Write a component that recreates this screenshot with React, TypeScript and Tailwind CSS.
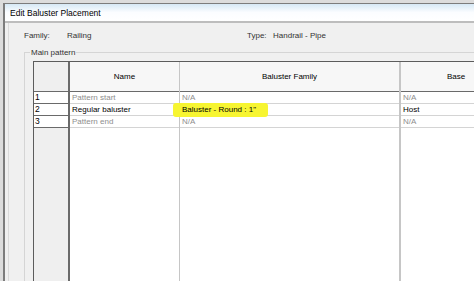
import React from "react";

const rows = [
  { n: "1", name: "Pattern start", fam: "N/A", base: "N/A", dim: true },
  { n: "2", name: "Regular baluster", fam: "Baluster - Round : 1\"", base: "Host", dim: false },
  { n: "3", name: "Pattern end", fam: "N/A", base: "N/A", dim: true },
];

export default function App() {
  return (
    <div
      className="w-[474px] h-[281px] overflow-hidden bg-[#dcdcdc] pt-[3px] pl-[3px] text-[8px] leading-none text-black"
      style={{ fontFamily: '"Liberation Sans", Arial, sans-serif' }}
    >
      <div className="h-[300px] border-l-2 border-t border-[#7c7c7c] bg-[#f0f0f0] flex flex-col">
        {/* title bar */}
        <div className="h-[19px] shrink-0 bg-gradient-to-b from-[#d6e8f5] via-[#fbfdff] to-white border-b-2 border-[#bdbdbd] flex items-center pl-[5px] pt-[1px]">
          <span className="text-[8.5px]">Edit Baluster Placement</span>
        </div>
        <div className="flex-1 border-l border-[#dadada] ml-[3px] pl-[15px] pt-[9px]">
          {/* Family / Type */}
          <div className="flex items-center h-[8px] text-[#333]">
            <span className="w-[43px]">Family:</span>
            <span className="w-[180px]">Railing</span>
            <span className="w-[26px]">Type:</span>
            <span>Handrail - Pipe</span>
          </div>
          {/* group box */}
          <div className="mt-[12px] border-l border-t border-[#d5d5d5] relative pl-[8px] pt-[8px] h-[300px]">
            <span className="absolute left-[5px] top-[-4px] bg-[#f0f0f0] px-[1px] text-[#333]">Main pattern</span>
            <div className="flex border-t border-l border-[#5c5c5c] bg-white h-[300px]">
              {/* row header column */}
              <div className="w-[36px] shrink-0 bg-[#efefef] border-r-2 border-[#6a6a6a] flex flex-col">
                <div className="h-[30px] border-b border-[#6a6a6a]" />
                {rows.map((r) => (
                  <div key={r.n} className="h-[12px] border-b border-[#6a6a6a] bg-white flex items-center pl-[1px] text-[8.5px]">
                    {r.n}
                  </div>
                ))}
              </div>
              {/* Name */}
              <div className="w-[110px] shrink-0 border-r border-[#c6c6c6] flex flex-col">
                <div className="h-[30px] border-b border-[#6a6a6a] bg-[#f7f7f7] flex items-center justify-center">Name</div>
                {rows.map((r) => (
                  <div key={r.n} className={`h-[12px] border-b border-[#d4d4d4] flex items-center pl-[2px] ${r.dim ? "text-[#8e8e8e]" : "text-black"}`}>
                    {r.name}
                  </div>
                ))}
              </div>
              {/* Baluster Family */}
              <div className="w-[221px] shrink-0 border-r-2 border-[#c6c6c6] flex flex-col">
                <div className="h-[30px] border-b border-[#6a6a6a] bg-[#f7f7f7] flex items-center justify-center">Baluster Family</div>
                {rows.map((r) => (
                  <div key={r.n} className={`h-[12px] border-b border-[#d4d4d4] flex items-center pl-[2px] ${r.dim ? "text-[#8e8e8e]" : "text-black"}`}>
                    {r.dim ? (
                      r.fam
                    ) : (
                      <span className="bg-[#f7f531] -ml-[9px] pl-[9px] pr-[12px] py-[3px] rounded-[3px]">{r.fam}</span>
                    )}
                  </div>
                ))}
              </div>
              {/* Base */}
              <div className="w-[110px] shrink-0 flex flex-col">
                <div className="h-[30px] border-b border-[#6a6a6a] bg-[#f7f7f7] flex items-center justify-center">Base</div>
                {rows.map((r) => (
                  <div key={r.n} className={`h-[12px] border-b border-[#d4d4d4] flex items-center pl-[2px] ${r.dim ? "text-[#8e8e8e]" : "text-black"}`}>
                    {r.base}
                  </div>
                ))}
              </div>
            </div>
          </div>
        </div>
      </div>
    </div>
  );
}
